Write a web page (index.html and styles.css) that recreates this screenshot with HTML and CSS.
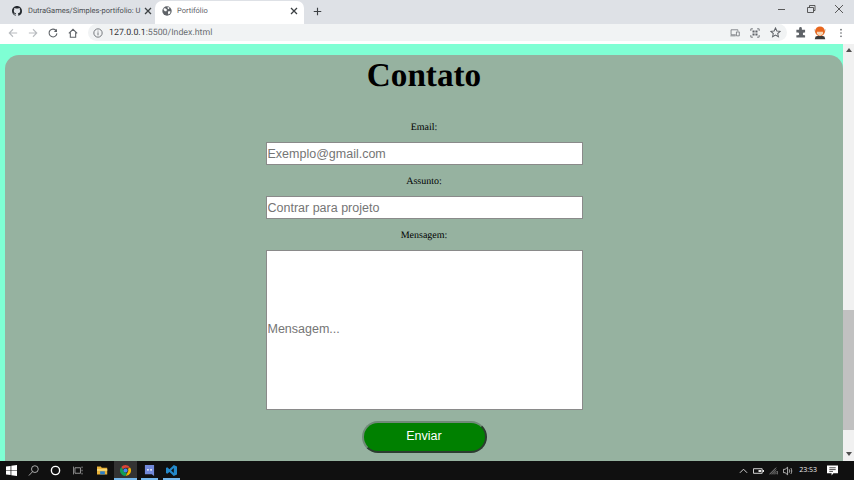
FILE: index.html
```html
<!DOCTYPE html>
<html lang="pt">
<head>
<meta charset="utf-8">
<title>Portifólio</title>
<link rel="stylesheet" href="styles.css">
</head>
<body>
<div class="tabstrip">
  <div class="tab tab-inactive">
    <svg class="favicon" viewBox="0 0 16 16"><path fill="#24292e" d="M8 0C3.58 0 0 3.58 0 8c0 3.54 2.29 6.53 5.47 7.59.4.07.55-.17.55-.38 0-.19-.01-.82-.01-1.49-2.01.37-2.53-.49-2.69-.94-.09-.23-.48-.94-.82-1.13-.28-.15-.68-.52-.01-.53.63-.01 1.08.58 1.23.82.72 1.21 1.87.87 2.33.66.07-.52.28-.87.51-1.07-1.78-.2-3.64-.89-3.64-3.95 0-.87.31-1.59.82-2.15-.08-.2-.36-1.02.08-2.12 0 0 .67-.21 2.2.82.64-.18 1.32-.27 2-.27s1.36.09 2 .27c1.53-1.04 2.2-.82 2.2-.82.44 1.1.16 1.92.08 2.12.51.56.82 1.27.82 2.15 0 3.07-1.87 3.75-3.65 3.95.29.25.54.73.54 1.48 0 1.07-.01 1.93-.01 2.2 0 .21.15.46.55.38A8.01 8.01 0 0 0 16 8c0-4.42-3.58-8-8-8z"/></svg>
    <span class="tab-title">DutraGames/Simples-portifolio: U</span>
    <svg class="tab-x" viewBox="0 0 10 10"><path d="M2 2l6 6M8 2l-6 6"/></svg>
  </div>
  <div class="tab tab-active">
    <svg class="favicon" viewBox="0 0 16 16"><circle cx="8" cy="8" r="7.5" fill="#5f6368"/><path fill="#fff" d="M3 3.5l3 .5 2 2-1 2.5-2.5 0-2-2.5zM9 1.5l3 1-1 2.5-2-1zM10 8.5l3.5 0-.5 3-2.500 2-1-2.500z"/></svg>
    <span class="tab-title tab-title-active">Portifólio</span>
    <svg class="tab-x" viewBox="0 0 10 10"><path d="M2 2l6 6M8 2l-6 6"/></svg>
  </div>
  <svg class="newtab" viewBox="0 0 12 12"><path d="M6 1v10M1 6h10"/></svg>
  <div class="strip-space"></div>
  <svg class="win-btn" viewBox="0 0 10 10"><path d="M1 5.500h7"/></svg>
  <svg class="win-btn" viewBox="0 0 10 10"><path d="M1.500 3.500h6v5h-6zM3.500 3.500v-2h5.500v5h-1.500"/></svg>
  <svg class="win-btn" viewBox="0 0 10 10"><path d="M1 1l8 8M9 1l-8 8"/></svg>
</div>
<div class="toolbar">
  <svg class="nav nav-off" viewBox="0 0 12 12"><path d="M11 6H1.500M6 1.500L1.500 6 6 10.500"/></svg>
  <svg class="nav nav-off" viewBox="0 0 12 12"><path d="M1 6h9.500M6 1.500L10.500 6 6 10.500"/></svg>
  <svg class="nav" viewBox="0 0 12 12"><path d="M10 3.500A4.700 4.700 0 1 0 10.700 6.500"/><path class="solid" d="M10.800 1v3.800H7z"/></svg>
  <svg class="nav" viewBox="0 0 12 12"><path d="M1 6.500L6 1.500l5 5M2.800 5.500V11h6.400V5.500"/></svg>
  <div class="omnibox">
    <svg class="info" viewBox="0 0 12 12"><circle cx="6" cy="6" r="5"/><path d="M6 5.200v3.600M6 3.200v1"/></svg>
    <span class="url">127.0.0.1<span class="url-dim">:5500/Index.html</span></span>
    <div class="strip-space"></div>
    <svg class="omni-icon" viewBox="0 0 14 12"><path d="M11 3V1.500H1.500v7H8M.5 10H8"/><path d="M9 4.500h4v5.500H9z"/></svg>
    <svg class="omni-icon" viewBox="0 0 12 12"><path d="M1 3.500V1h2.500M8.500 1H11v2.500M11 8.500V11H8.500M3.500 11H1V8.500"/><path class="solid" d="M3 3h2.500v2.500H3zM6.500 3H9v2.500H6.500zM3 6.500h2.500V9H3zM6.500 6.500H9V9H6.500z"/></svg>
    <svg class="omni-icon star" viewBox="0 0 12 12"><path d="M6 1l1.500 3.300 3.600.4-2.700 2.400.8 3.500L6 8.800l-3.200 1.800.8-3.500L.9 4.700l3.600-.4z"/></svg>
  </div>
  <svg class="ext" viewBox="0 0 12 12"><path d="M4.500 1.500a1.500 1.500 0 0 1 3 0V3H11v3h-1a1.500 1.500 0 0 0 0 3h1v2.500H1.500V9H3a1.500 1.500 0 0 0 0-3H1.500V3h3z"/></svg>
  <svg class="avatar" viewBox="0 0 16 16"><path fill="#3a3a3a" d="M2 15l1-3 3-1h4l3 1 1 3z"/><path fill="#c9c4b8" d="M1 3l3 3-1 3zM15 3l-3 3 1 3z"/><circle cx="8" cy="6" r="5.500" fill="#e8661d"/><path fill="#f6d7b8" d="M4.500 6.500h7V9L8 11.500 4.500 9z"/></svg>
  <svg class="kebab" viewBox="0 0 4 12"><circle cx="2" cy="2" r="1"/><circle cx="2" cy="6" r="1"/><circle cx="2" cy="10" r="1"/></svg>
</div>
<div class="viewport">
  <main class="page">
    <section class="card">
      <h1 class="heading">Contato</h1>
      <form class="form">
        <label class="label" for="email">Email:</label>
        <input class="field" id="email" type="text" placeholder="Exemplo@gmail.com">
        <label class="label" for="assunto">Assunto:</label>
        <input class="field" id="assunto" type="text" placeholder="Contrar para projeto">
        <label class="label" for="msg">Mensagem:</label>
        <input class="field field-big" id="msg" type="text" placeholder="Mensagem...">
        <button class="send" type="button">Enviar</button>
      </form>
    </section>
  </main>
  <div class="scrollbar">
    <div class="arrow-up"></div>
    <div class="thumb"></div>
    <div class="arrow-down"></div>
  </div>
</div>
<footer class="taskbar">
  <svg class="tb-start" viewBox="0 0 12 12"><path d="M0 1.700L5 1v4.600H0zM5.800.9L12 0v5.600H5.800zM0 6.400h5V11l-5-.7zM5.800 6.400H12V12l-6.200-.9z"/></svg>
  <svg class="tb-icon tb-search" viewBox="0 0 12 12"><circle cx="7.500" cy="4.500" r="3.700"/><path d="M5 7.200L1 11.500"/></svg>
  <svg class="tb-icon tb-cortana" viewBox="0 0 12 12"><circle cx="6" cy="6" r="4.500"/></svg>
  <svg class="tb-icon tb-task" viewBox="0 0 14 12"><path d="M2.500 2.500h7v7h-7zM.5 1v10M11.500 1v2M11.500 5v2M11.500 9v2"/></svg>
  <div class="tb-app tb-gap">
    <svg class="app-svg" viewBox="0 0 14 12"><path fill="#e8b23a" d="M0 1h5l1 1.500h7V11H0z"/><path fill="#2d7fc7" d="M4 7h6v4H4z"/><path fill="#f7d774" d="M0 4h13v2.500H0z"/></svg>
  </div>
  <div class="tb-app tb-active tb-line">
    <svg class="app-svg" viewBox="0 0 12 12"><path fill="#db4437" d="M6 0a6 6 0 0 1 5.200 3H6a3 3 0 0 0-2.800 1.800L1.400 2.200A6 6 0 0 1 6 0z"/><path fill="#f4b400" d="M11.200 3A6 6 0 0 1 6 12l2.600-4.500A3 3 0 0 0 8.400 4z"/><path fill="#0f9d58" d="M1.400 2.200l2.700 4.600A3 3 0 0 0 7.500 8.600L5.800 12A6 6 0 0 1 1.400 2.200z"/><circle cx="6" cy="6" r="2.200" fill="#4285f4"/></svg>
  </div>
  <div class="tb-app tb-pin tb-line">
    <svg class="app-svg" viewBox="0 0 12 12"><path fill="#7289da" d="M1 0h10v12l-2.500-2H1z"/><circle cx="4.300" cy="5.300" r="1" fill="#fff"/><circle cx="7.700" cy="5.300" r="1" fill="#fff"/></svg>
  </div>
  <div class="tb-app tb-pin tb-line">
    <svg class="app-svg" viewBox="0 0 12 12"><path fill="#2489ca" d="M8.500 0L12 1.600v8.800L8.500 12 3.800 7.500 1.300 9.500 0 8.800V3.200l1.300-.7 2.500 2zM8.500 3.200L5.600 6l2.900 2.800z"/></svg>
  </div>
  <div class="strip-space"></div>
  <svg class="tray tray-chevron" viewBox="0 0 10 6"><path d="M1 5l4-4 4 4"/></svg>
  <svg class="tray tray-batt" viewBox="0 0 12 8"><path d="M.5 1.500h9.500v5H.5z"/><path class="tray-solid" d="M6 3h3v2H6zM10.500 3H12v2h-1.500z"/></svg>
  <svg class="tray tray-wifi" viewBox="0 0 12 10"><path d="M.5 9.500L9.500.5M3 9.500L9.500 3M5.500 9.500L9.500 5.500M8 9.500l1.500-1.500M11 5v4.500"/></svg>
  <svg class="tray tray-vol" viewBox="0 0 12 12"><path d="M.5 4v4h2L5.500 10.500v-9L2.500 4zM7.500 4c.7 1.200.7 2.800 0 4M9.500 2.500c1.300 2.200 1.300 4.800 0 7"/></svg>
  <span class="clock">23:53</span>
  <svg class="notif" viewBox="0 0 12 12"><path d="M0 .5h12v8.500H7L5 11.500V9H0z"/><path class="notif-line" d="M2.500 3h7M2.500 5h7M2.500 7h4"/></svg>
</footer>
</body>
</html>
```
FILE: styles.css
```css
* { box-sizing: border-box; }
html, body { margin: 0; height: 480px; overflow: hidden; }
body { display: flex; flex-direction: column; width: 854px; font-family: "Liberation Serif", serif; text-rendering: geometricPrecision; }

.tabstrip { height: 24px; background: #dee1e6; display: flex; align-items: flex-start; padding-right: 10px; font-family: "Roboto", "Liberation Sans", sans-serif; flex: none; }
.tab { display: flex; align-items: center; font-size: 7.500px; color: #5f6368; flex: none; }
.tab-inactive { width: 155px; height: 21px; padding: 0 5px 0 12px; }
.tab-active { width: 149px; height: 23px; margin-top: 1px; padding: 0 5px 4px 7px; background: #fff; border-radius: 7px 7px 0 0; }
.favicon { width: 10px; height: 10px; flex: none; margin-right: 6px; }
.tab-active .favicon { margin-right: 5px; }
.tab-title { flex: 1; white-space: nowrap; color: #4a4d51; }
.tab-title-active { color: #5f6368; }
.tab-x { width: 10px; height: 10px; flex: none; fill: none; stroke: #3c4043; stroke-width: 1.300; margin-left: 3px; }
.newtab { width: 9px; height: 9px; margin: 7px 0 0 9px; fill: none; stroke: #3c4043; stroke-width: 1.500; flex: none; }
.strip-space { flex: 1; }
.win-btn { width: 10px; height: 10px; margin: 4px 0 0 18.500px; fill: none; stroke: #4a4a4a; stroke-width: .9; flex: none; }

.toolbar { height: 20px; background: #fff; display: flex; align-items: center; padding: 0 0 3px 8px; flex: none; }
.nav { width: 10px; height: 10px; flex: none; margin-right: 10px; fill: none; stroke: #5f6368; stroke-width: 1.300; }
.nav-off { stroke: #b9bcc0; }
.solid { fill: #5f6368; stroke: none; }
.omnibox { width: 699px; height: 17px; background: #f1f3f4; border-radius: 9px; display: flex; align-items: center; padding: 0 6.500px 0 5px; flex: none; }
.info { width: 10px; height: 10px; fill: none; stroke: #5f6368; stroke-width: 1; margin-right: 6px; flex: none; }
.url { font-family: "Roboto", "Liberation Sans", sans-serif; font-size: 8.800px; color: #303134; }
.url-dim { color: #6a6d71; }
.omni-icon { width: 10px; height: 10px; margin-left: 10px; fill: none; stroke: #5f6368; stroke-width: 1; flex: none; }
.star { width: 11px; height: 11px; stroke-width: 1.100; }
.ext { width: 11px; height: 11px; margin-left: 8px; fill: #5f6368; flex: none; }
.avatar { width: 14px; height: 14px; margin-left: 7px; flex: none; }
.kebab { width: 4px; height: 10px; margin-left: 12px; fill: #5f6368; flex: none; }

.viewport { flex: 1; display: flex; min-height: 0; background: #7fffd4; }
.page { flex: 1; padding: 11px 0 0 5px; display: flex; min-width: 0; }
.card { flex: 1; background: #96b2a0; border-radius: 14px 14px 0 0; display: flex; flex-direction: column; align-items: center; }
.heading { margin: 0; font-size: 33.200px; line-height: 42px; font-weight: bold; color: #000; }
.form { display: flex; flex-direction: column; align-items: center; margin-top: 24px; }
.label { font-size: 10px; line-height: 12px; color: #000; padding-top: 1px; height: 13px; margin-bottom: 8px; }
.field { width: 317px; height: 23px; padding: 0 1px; border: 1px solid #8a8a8a; background: #fff; font-family: "Liberation Sans", sans-serif; font-size: 12.500px; margin: 0 0 10px; border-radius: 0; outline: none; }
.field::placeholder { color: #757575; opacity: 1; }
.field-big { height: 160px; padding-bottom: 2px; }
.send { width: 125px; height: 32px; margin-top: 1px; background: #008000; color: #fff; border: 2px solid; border-color: #708a78 #2c3c30 #2c3c30 #708a78; border-radius: 16px; font-family: "Liberation Sans", sans-serif; font-size: 12.500px; padding: 0 0 2px; }

.scrollbar { width: 11px; background: #f1f1f1; display: flex; flex-direction: column; align-items: center; flex: none; }
.arrow-up { width: 0; height: 0; margin-top: 4px; border: 3px solid transparent; border-top: 0; border-bottom: 4px solid #505050; }
.thumb { width: 100%; height: 120px; background: #c1c1c1; margin-top: 258px; }
.arrow-down { width: 0; height: 0; margin-top: 22px; border: 3px solid transparent; border-bottom: 0; border-top: 4px solid #505050; }

.taskbar { height: 19px; background: #101010; display: flex; align-items: stretch; flex: none; color: #fff; }
.tb-start { width: 11px; height: 11px; margin: 4px 0 0 6px; fill: #fff; flex: none; }
.tb-icon { width: 11px; height: 11px; margin-top: 4px; fill: none; stroke: #c8c8c8; stroke-width: .9; flex: none; }
.tb-search { margin-left: 11px; }
.tb-cortana { margin-left: 11px; stroke: #fff; stroke-width: 1.500; }
.tb-task { margin-left: 11.500px; }
.tb-app { width: 23px; display: flex; align-items: center; justify-content: center; flex: none; }
.tb-gap { margin-left: 7.500px; }
.tb-active { background: #333; }
.tb-pin { width: 17px; margin: 0 2px 0 3.500px; }
.tb-line { box-shadow: inset 0 -2px 0 #76b9ed; }
.app-svg { width: 11px; height: 11px; }
.tray { flex: none; align-self: center; fill: none; stroke: #e4e4e4; stroke-width: 1; }
.tray-chevron { width: 9px; height: 6px; margin-right: 5px; }
.tray-batt { width: 11px; height: 8px; margin-right: 5px; }
.tray-solid { fill: #e4e4e4; stroke: none; }
.tray-wifi { width: 9px; height: 8px; margin-right: 5.500px; stroke: #aaa; }
.tray-vol { width: 10px; height: 10px; margin-right: 6px; stroke-width: .9; }
.clock { align-self: center; font-family: "Open Sans", "Liberation Sans", sans-serif; font-size: 7px; color: #e8e8e8; margin-right: 10px; }
.notif { width: 11px; height: 11px; align-self: center; fill: #fff; margin-right: 16px; flex: none; }
.notif-line { fill: none; stroke: #101010; stroke-width: .8; }
```
